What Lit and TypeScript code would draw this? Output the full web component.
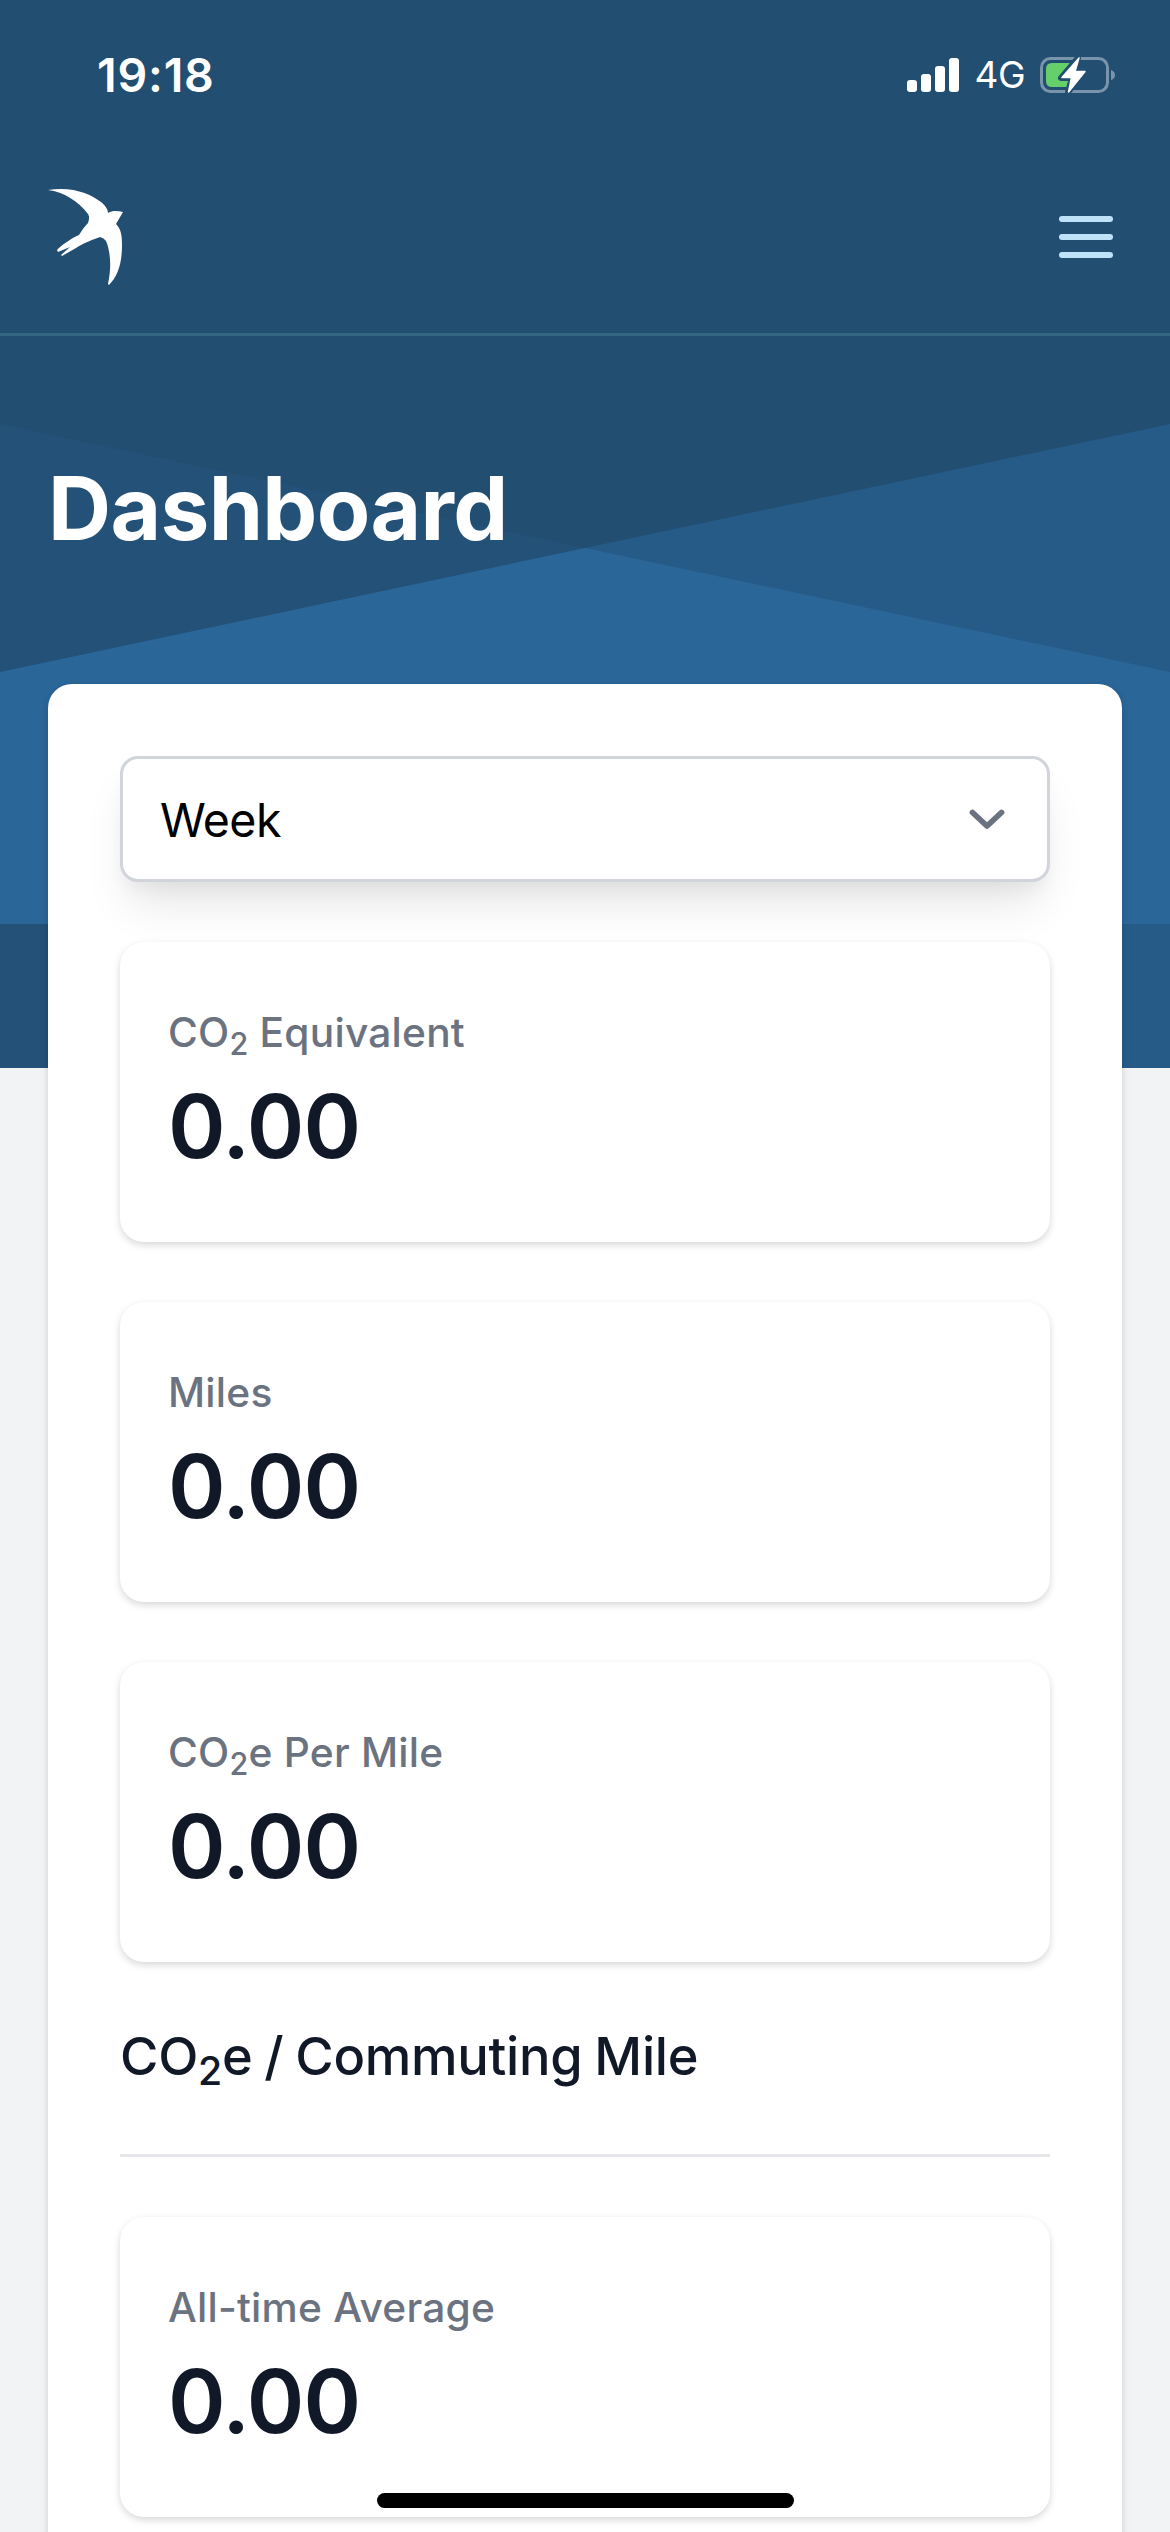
import { LitElement, html, css } from "lit";
import { customElement, property } from "lit/decorators.js";

@customElement("stat-card")
class StatCard extends LitElement {
  @property() value = "";

  static styles = css`
    :host {
      display: flex;
      flex-direction: column;
      box-sizing: border-box;
      height: 300px;
      padding: 60px 48px;
      border-radius: 24px;
      background: #fff;
      box-shadow: 0 3px 9px rgba(0, 0, 0, 0.1), 0 3px 6px rgba(0, 0, 0, 0.06);
    }
    .label {
      height: 60px;
      line-height: 61px;
      font-size: 40.7px;
      font-weight: 500;
      letter-spacing: 0.22px;
      color: #6b7280;
      white-space: nowrap;
    }
    .value {
      margin-top: 10px;
      height: 108px;
      line-height: 108px;
      font-size: 87.3px;
      font-weight: 600;
      letter-spacing: -0.9px;
      color: #111827;
      white-space: nowrap;
    }
  `;

  render() {
    return html`
      <div class="label"><slot></slot></div>
      <div class="value">${this.value}</div>
    `;
  }
}

@customElement("app-root")
class AppRoot extends LitElement {
  static styles = css`
    :host {
      display: block;
      position: relative;
      box-sizing: border-box;
      width: 1170px;
      height: 2532px;
      overflow: hidden;
      background: #f2f3f5;
      font-family: Inter, "Liberation Sans", sans-serif;
    }
    .backdrop {
      position: absolute;
      top: 0;
      left: 0;
      display: block;
    }
    .page {
      position: relative;
      display: flex;
      flex-direction: column;
    }
    .status {
      display: flex;
      align-items: center;
      justify-content: space-between;
      box-sizing: border-box;
      height: 141px;
      padding: 9px 54px 0 97px;
      color: #fff;
    }
    .time {
      font-size: 46.5px;
      font-weight: 600;
      letter-spacing: 0.8px;
    }
    .signals {
      display: flex;
      align-items: center;
    }
    .network {
      margin: 0 15px 0 14px;
      font-size: 37px;
      line-height: 40px;
      font-weight: 400;
      letter-spacing: -0.5px;
    }
    svg {
      display: block;
    }
    .nav {
      display: flex;
      align-items: center;
      justify-content: space-between;
      box-sizing: border-box;
      height: 195px;
      padding: 0 57px 0 48px;
      border-bottom: 3px solid #336681;
    }
    .title {
      margin: 0;
      padding: 118px 48px 0;
      height: 230px;
      line-height: 108px;
      font-size: 87.3px;
      font-weight: 700;
      letter-spacing: -0.65px;
      color: #fff;
    }
    .panel {
      display: flex;
      flex-direction: column;
      box-sizing: border-box;
      height: 2000px;
      margin: 0 48px;
      padding: 72px;
      border-radius: 24px;
      background: #fff;
      box-shadow: 0 3px 9px rgba(0, 0, 0, 0.1), 0 3px 6px rgba(0, 0, 0, 0.06);
    }
    .select {
      display: flex;
      align-items: center;
      justify-content: space-between;
      box-sizing: border-box;
      height: 126px;
      padding: 0 42px 0 37px;
      border: 3px solid #d1d5db;
      border-radius: 18px;
      background: #fff;
      font-size: 46.5px;
      letter-spacing: -0.6px;
      color: #000;
      box-shadow: 0 30px 45px -9px rgba(0, 0, 0, 0.1),
        0 12px 18px -6px rgba(0, 0, 0, 0.05);
    }
    .choice {
      padding-top: 2px;
    }
    .cards {
      display: flex;
      flex-direction: column;
      gap: 60px;
      margin-top: 60px;
    }
    .heading {
      box-sizing: border-box;
      height: 195px;
      margin: 0 0 60px;
      padding-top: 58px;
      border-bottom: 3px solid #e5e7eb;
      line-height: 72px;
      font-size: 52.4px;
      font-weight: 500;
      letter-spacing: -0.28px;
      word-spacing: -1.8px;
      color: #111827;
      white-space: nowrap;
    }
    sub {
      position: relative;
      bottom: -0.25em;
      font-size: 75%;
      line-height: 0;
      vertical-align: baseline;
    }
    .home {
      position: absolute;
      left: 377px;
      top: 2493px;
      width: 417px;
      height: 15px;
      border-radius: 8px;
      background: #000;
    }
  `;

  render() {
    return html`
      <svg class="backdrop" width="1170" height="1068" viewBox="0 0 1170 1068">
        <path fill="#235178" d="M0 0H585V1068H0z" />
        <path fill="#265b88" d="M585 0H1170V1068H585z" />
        <path fill="#2b6699" d="M0 672L585 548L1170 672V924H0z" />
        <path fill="#224e72" d="M0 0H1170V424L585 548L0 424z" />
      </svg>
      <div class="page">
        <div class="status">
          <span class="time">19:18</span>
          <div class="signals">
            <svg width="53" height="36" viewBox="0 0 53 36" fill="#fff">
              <rect x="0" y="23" width="10" height="12" rx="3" />
              <rect x="14" y="17" width="10" height="18" rx="3" />
              <rect x="28" y="9" width="10" height="26" rx="3" />
              <rect x="42" y="1" width="10" height="34" rx="3" />
            </svg>
            <span class="network">4G</span>
            <svg width="76" height="40" viewBox="0 0 76 40">
              <rect x="1.5" y="3.5" width="66" height="33" rx="9" fill="none" stroke="#7a95ab" stroke-width="3" />
              <path d="M71 15q4 1.500 4 5t-4 5z" fill="#7a95ab" />
              <path d="M12 8H31V32H12q-6 0-6-6V14q0-6 6-6z" fill="#65d06a" />
              <path d="M38 3L21 23H32L28 37L46 16H34.500z" fill="#fff" stroke="#224e72" stroke-width="6" stroke-linejoin="round" />
              <path d="M39 3L22 22.500H31.500L28.500 37L45 16.500H35z" fill="#fff" stroke="#fff" stroke-width="1.500" stroke-linejoin="round" />
            </svg>
          </div>
        </div>
        <div class="nav">
          <svg width="76" height="98" viewBox="0 0 76 98" fill="#fff">
            <path d="M0 2C24-2 43 6 53 14C58 18 60 22 60 25C65 22 70 23 75 24L68 36C73 41 74 47 74 57C74 75 70 88 61 97L60 96C64 78 62 62 58 53Q56 50 52 49C41 53 34 56 28 60L14 68L13 67L22 59L10 64L9 62C14 57 22 51 31 47C34 42 37 38 40 35C41 32 42 29 40 26C30 13 16 4 0 2z" />
          </svg>
          <svg width="54" height="42" viewBox="0 0 54 42" fill="#bee3f8">
            <rect y="0" width="54" height="6" rx="3" />
            <rect y="18" width="54" height="6" rx="3" />
            <rect y="36" width="54" height="6" rx="3" />
          </svg>
        </div>
        <h1 class="title">Dashboard</h1>
        <div class="panel">
          <div class="select">
            <span class="choice">Week</span>
            <svg width="36" height="21" viewBox="0 0 36 21" fill="none" stroke="#6b7280" stroke-width="5.8" stroke-linecap="round" stroke-linejoin="round">
              <path d="M3.500 3.500L18 17L32.500 3.500" />
            </svg>
          </div>
          <div class="cards">
            <stat-card value="0.00">CO<sub>2</sub> Equivalent</stat-card>
            <stat-card value="0.00">Miles</stat-card>
            <stat-card value="0.00">CO<sub>2</sub>e Per Mile</stat-card>
          </div>
          <h2 class="heading">CO<sub>2</sub>e / Commuting Mile</h2>
          <stat-card value="0.00">All-time Average</stat-card>
        </div>
      </div>
      <div class="home"></div>
    `;
  }
}
